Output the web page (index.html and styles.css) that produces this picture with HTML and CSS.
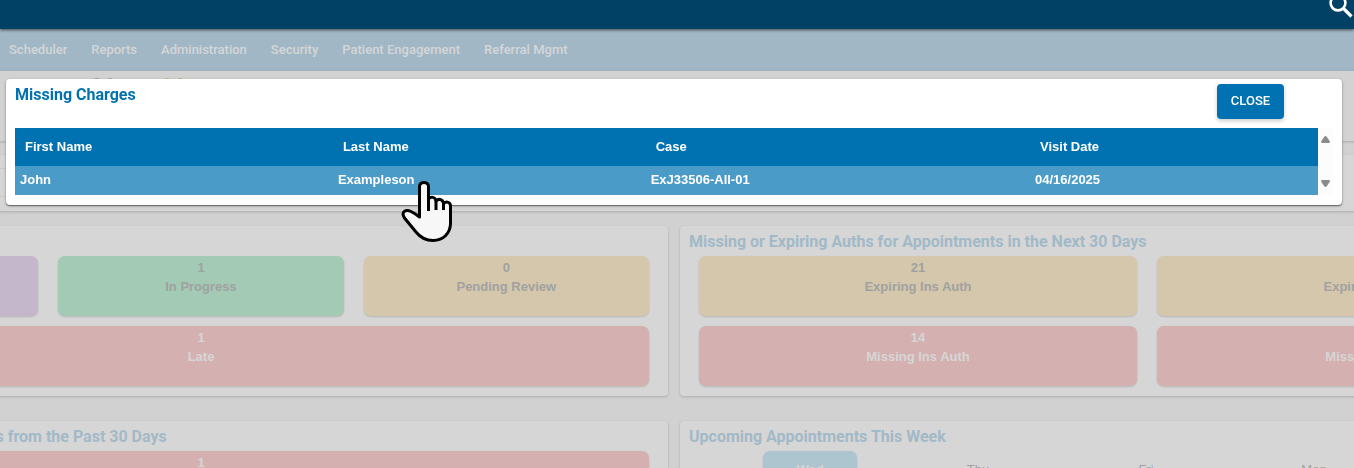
FILE: index.html
```
<!DOCTYPE html>
<html lang="en">
<head>
  <meta charset="UTF-8" />
  <meta name="viewport" content="width=device-width, initial-scale=1.0"/>
  <title>Missing Charges</title>
  <link rel="stylesheet" href="styles.css">
</head>
<body>

  <header class="topbar">
    <button class="search-btn" aria-label="Search">
      <svg width="24" height="24" viewBox="0 0 24 24">
        <circle cx="9" cy="9" r="7.4" fill="none" stroke="#fff" stroke-width="2.6"/>
        <path d="M14.5 14.5L22.5 22.5" stroke="#fff" stroke-width="3.2"/>
      </svg>
    </button>
  </header>

  <nav class="menu">
    <a href="#">Scheduler</a>
    <a href="#">Reports</a>
    <a href="#">Administration</a>
    <a href="#">Security</a>
    <a href="#">Patient Engagement</a>
    <a href="#">Referral Mgmt</a>
  </nav>

  <main class="dashboard">
    <section class="card summary">
      <div class="counts"><span>0</span><span>0</span></div>
      <div class="counts pending"><span>0</span><span>0</span></div>
    </section>
    <section class="card filters"><div class="filter-box"></div></section>

    <div class="panels">
      <section class="card panel">
        <h2>&nbsp;</h2>
        <div class="tile-row">
          <div class="tile purple"></div>
          <div class="tile green"><span>1</span><span>In Progress</span></div>
          <div class="tile yellow"><span>0</span><span>Pending Review</span></div>
        </div>
        <div class="tile-row">
          <div class="tile red"><span>1</span><span>Late</span></div>
        </div>
      </section>

      <section class="card panel">
        <h2>Missing or Expiring Auths for Appointments in the Next 30 Days</h2>
        <div class="tile-row">
          <div class="tile yellow"><span>21</span><span>Expiring Ins Auth</span></div>
          <div class="tile yellow"><span>&nbsp;</span><span>Expiring Rx Auth</span></div>
        </div>
        <div class="tile-row">
          <div class="tile red"><span>14</span><span>Missing Ins Auth</span></div>
          <div class="tile red"><span>&nbsp;</span><span>Missing Rx Auth</span></div>
        </div>
      </section>

      <section class="card panel">
        <h2 class="past">Charges from the Past 30 Days</h2>
        <div class="tile-row">
          <div class="tile red"><span>1</span></div>
        </div>
      </section>

      <section class="card panel">
        <h2>Upcoming Appointments This Week</h2>
        <div class="week">
          <div class="day today">Wed</div>
          <div class="day">Thu</div>
          <div class="day">Fri</div>
          <div class="day">Mon</div>
          <div class="day">Tue</div>
        </div>
      </section>
    </div>
  </main>

  <div class="modal" role="dialog" aria-labelledby="modalTitle">
    <div class="modal-header">
      <h2 id="modalTitle">Missing Charges</h2>
      <button class="close-btn">CLOSE</button>
    </div>
    <div class="table-wrap">
      <table>
        <thead>
          <tr>
            <th class="col-first">First Name</th>
            <th class="col-last">Last Name</th>
            <th class="col-case">Case</th>
            <th>Visit Date</th>
          </tr>
        </thead>
        <tbody>
          <tr>
            <td>John</td>
            <td>Exampleson</td>
            <td>ExJ33506-All-01</td>
            <td>04/16/2025</td>
          </tr>
        </tbody>
      </table>
      <div class="scroller">
        <svg width="9" height="7" viewBox="0 0 9 7"><path d="M3.5 .5Q4.5 -.4 5.5 .5L8.8 5.2Q9.2 7 7.8 7H1.2Q-.2 7 .2 5.2Z" fill="#8b8b8b"/></svg>
        <svg width="9" height="7" viewBox="0 0 9 7"><path d="M3.5 6.5Q4.5 7.4 5.5 6.5L8.8 1.8Q9.2 0 7.8 0H1.2Q-.2 0 .2 1.8Z" fill="#8b8b8b"/></svg>
      </div>
    </div>

    <svg class="pointer" width="52" height="64" viewBox="0 0 52 64">
      <path d="M18.500 38V7.500C18.500 2 27.500 2 27.500 7.500V20C30 17 34.500 18 35 22C38 19 42 20.500 42.500 24.500C45.500 22 49.500 23 49.500 27V45C49 54 43 61 32 61.500C25 61.500 19 58 15 53L3.500 39C-0.500 32.500 5 30 10 32.500C13 34 16 36 18.500 38Z" fill="#f7f7f7" stroke="#000" stroke-width="3" stroke-linejoin="round"/>
      <path d="M27.500 18V32M35 21.500V31M42.500 24V31" fill="none" stroke="#000" stroke-width="3"/>
    </svg>
  </div>

</body>
</html>
```
FILE: styles.css
```
* {
  box-sizing: border-box;
}

body {
  margin: 0;
  font-family: Roboto, sans-serif;
  font-size: 14px;
  background: #d1d1d1;
  overflow: hidden;
}

h2 {
  margin: 0;
  font-size: 16px;
  line-height: 22px;
  font-weight: 700;
}

button {
  border: none;
  cursor: pointer;
}

.topbar {
  position: relative;
  z-index: 1;
  display: flex;
  justify-content: flex-end;
  align-items: flex-end;
  height: 29px;
  padding: 0 1px 11px;
  background: #004165;
  box-shadow: 0 1px 3px rgba(0,0,0,0.6);
}

.search-btn {
  padding: 0;
  background: none;
}

.search-btn svg {
  display: block;
}

.menu {
  display: flex;
  gap: 24px;
  height: 42px;
  padding: 0 9px;
  line-height: 41px;
  background: #a2b7c5;
  box-shadow: 0 1px 3px rgba(0,0,0,0.15);
}

.menu a {
  font-size: 13px;
  font-weight: 500;
  color: #d3d6d8;
  text-decoration: none;
}

/* wider than the window on both sides */
.dashboard {
  width: calc(100% + 526px);
  margin-left: -266px;
}

.card {
  background: #d6d6d6;
  border-radius: 4px;
  box-shadow: 0 1px 3px rgba(0,0,0,0.18);
}

.summary {
  display: flex;
  gap: 50px;
  height: 70px;
  padding: 2px 359px;
  margin-bottom: 14px;
  background: #d2d2d2;
}

.counts {
  display: flex;
  gap: 6px;
  font-size: 13px;
  line-height: 19px;
  color: #a1a1a1;
}

.pending {
  color: #c4b48e;
}

.filters {
  height: 56px;
  padding-top: 13px;
  margin-bottom: 15px;
}

.filter-box {
  width: 50%;
  height: 29px;
  border: 1px solid #c9c9c9;
}

.panels {
  display: grid;
  grid-template-columns: 1fr 1fr;
  gap: 25px 12px;
}

.panel {
  padding: 5px 19px 10px;
}

.panel h2 {
  margin: 0 -10px 3px;
  color: #a2b9c7;
}

.panel .past {
  padding-left: 201px;
}

.tile-row {
  display: flex;
  gap: 20px;
}

.tile-row + .tile-row {
  margin-top: 10px;
}

.tile {
  flex: 1;
  height: 60px;
  padding-top: 2px;
  border-radius: 7px;
  font-family: "Liberation Sans", sans-serif;
  font-size: 13px;
  font-weight: bold;
  line-height: 19px;
  text-align: center;
  color: #a1a1a1;
  box-shadow: 0 1px 2px rgba(0,0,0,0.15);
}

.tile span {
  display: block;
}

.purple {
  background: #c4b7cb;
}

.green {
  background: #a2cab4;
}

.yellow {
  background: #d5c7ab;
}

.red {
  background: #d5b0b0;
  color: #d6d6d6;
}

.week {
  display: flex;
  gap: 74px;
  padding-left: 64px;
}

.day {
  width: 94px;
  height: 60px;
  padding-top: 11px;
  border-radius: 7px;
  font-family: "Liberation Sans", sans-serif;
  font-size: 13px;
  text-align: center;
  color: #a1a1a1;
}

.today {
  background: #adc5cf;
  color: #d6d6d6;
  font-weight: bold;
  box-shadow: 0 1px 2px rgba(0,0,0,0.15);
}

.modal {
  position: fixed;
  z-index: 10;
  top: 79px;
  left: 6px;
  right: 12px;
  padding: 5px 9px 10px;
  background: #fff;
  border-radius: 4px;
  box-shadow: 0 1px 1px rgba(0,0,0,0.4), 0 1px 3px rgba(0,0,0,0.3);
}

.modal-header {
  display: flex;
  justify-content: space-between;
  align-items: flex-start;
  padding-right: 49px;
  margin-bottom: 9px;
}

.modal-header h2 {
  color: #0072b1;
}

.close-btn {
  width: 67px;
  height: 35px;
  padding: 0 0 2px;
  background: #0072b1;
  color: #fff;
  border-radius: 4px;
  font-family: Roboto, sans-serif;
  font-size: 13px;
  font-weight: 500;
  box-shadow: 0 2px 4px rgba(0,0,0,0.2);
}

.table-wrap {
  display: flex;
}

table {
  flex: 1;
  table-layout: fixed;
  border-collapse: collapse;
  font-family: "Liberation Sans", sans-serif;
  font-size: 13px;
  font-weight: bold;
  color: #fff;
}

th {
  height: 38px;
  padding: 0 10px 2px;
  text-align: left;
  background: #0072b1;
}

td {
  height: 29px;
  padding: 0 5px 2px;
  background: #4a9bc8;
}

.col-first {
  width: 24.4%;
}

.col-last {
  width: 24%;
}

.col-case {
  width: 29.5%;
}

.scroller {
  display: flex;
  flex-direction: column;
  justify-content: space-between;
  align-items: center;
  width: 15px;
  padding: 8px 0;
  background: #fcfcfc;
}

.pointer {
  position: absolute;
  top: 100px;
  left: 395px;
}
```
